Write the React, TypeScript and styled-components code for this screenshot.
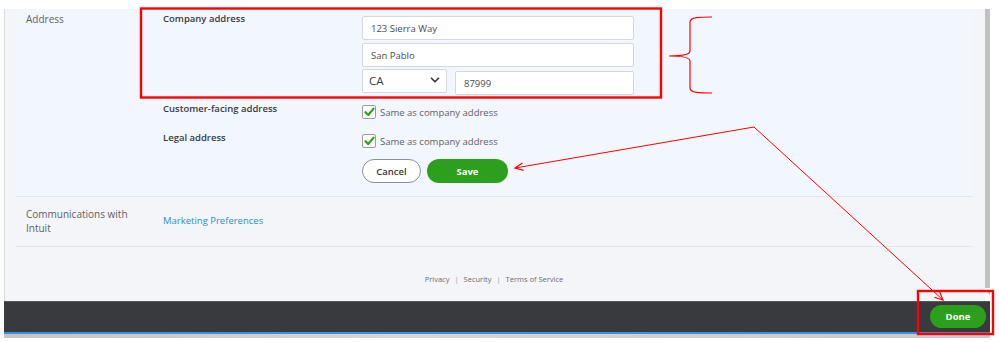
import styled, { createGlobalStyle } from "styled-components";
import { ChevronDown } from "lucide-react";

const GlobalStyle = createGlobalStyle`
  body {
    margin: 0;
    background: #ffffff;
    font-family: "Open Sans", "Liberation Sans", sans-serif;
  }
  * { box-sizing: border-box; }
`;

const App = () => {
  return (
    <Page>
      <GlobalStyle />
      <Window>
        <Main>
          <Content>
            <AddressSection>
              <SectionLabel>Address</SectionLabel>
              <SectionBody>
                <FieldRow>
                  <FieldLabel>Company address</FieldLabel>
                  <InputStack>
                    <TextInput defaultValue="123 Sierra Way" />
                    <TextInput defaultValue="San Pablo" />
                    <InputLine>
                      <Select>
                        <span>CA</span>
                        <ChevronDown size={14} strokeWidth={3} color="#393a3d" />
                      </Select>
                      <ZipInput defaultValue="87999" />
                    </InputLine>
                  </InputStack>
                </FieldRow>
                <FieldRow $top={7}>
                  <FieldLabel>Customer-facing address</FieldLabel>
                  <CheckLine>
                    <CheckBox>
                      <CheckMark />
                    </CheckBox>
                    <CheckText>Same as company address</CheckText>
                  </CheckLine>
                </FieldRow>
                <FieldRow $top={11}>
                  <FieldLabel>Legal address</FieldLabel>
                  <CheckLine>
                    <CheckBox>
                      <CheckMark />
                    </CheckBox>
                    <CheckText>Same as company address</CheckText>
                  </CheckLine>
                </FieldRow>
                <FieldRow $top={10}>
                  <span />
                  <ButtonGroup>
                    <CancelButton>Cancel</CancelButton>
                    <SaveButton>Save</SaveButton>
                  </ButtonGroup>
                </FieldRow>
              </SectionBody>
            </AddressSection>
            <CommsSection>
              <SectionLabel>
                Communications with
                <br />
                Intuit
              </SectionLabel>
              <SectionBody>
                <LinkText>Marketing Preferences</LinkText>
              </SectionBody>
            </CommsSection>
            <Footer>
              <FooterLink>Privacy</FooterLink>
              <Pipe>|</Pipe>
              <FooterLink>Security</FooterLink>
              <Pipe>|</Pipe>
              <FooterLink>Terms of Service</FooterLink>
            </Footer>
          </Content>
          <ScrollTrack>
            <Thumb />
            <ScrollArrow />
          </ScrollTrack>
        </Main>
        <DarkBar>
          <DoneButton>Done</DoneButton>
        </DarkBar>
        <BottomStrip />
      </Window>
      <Annotations />
    </Page>
  );
};

const CheckMark = () => (
  <svg width="11" height="10" viewBox="0 0 11 10">
    <path
      d="M1.5 5.2 L4.2 8 L9.6 1.6"
      fill="none"
      stroke="#2ca01c"
      strokeWidth="2.2"
      strokeLinecap="round"
      strokeLinejoin="round"
    />
  </svg>
);

const Annotations = () => (
  <Overlay width="999" height="342" viewBox="0 0 999 342">
    <g fill="none" stroke="#ff0000">
      <rect x="141" y="8.5" width="520" height="89" strokeWidth="2.4" />
      <path
        d="M712 17 C700 17 690 17 690 22 L690 51 C690 55 680 56 669 56 C680 56 690 57 690 61 L690 88 C690 93 700 93 712 93"
        strokeWidth="1.2"
      />
      <polyline points="515,168 754,127 943,300" strokeWidth="1" />
      <polyline points="522.4,162.9 515,168 523.7,170.4" strokeWidth="1.2" />
      <polyline points="939.6,291.7 943,300 934.4,297.3" strokeWidth="1.2" />
      <rect x="918" y="291" width="75" height="43" strokeWidth="2.4" />
    </g>
  </Overlay>
);

const Page = styled.div`
  width: 999px;
  height: 342px;
  position: relative;
  overflow: hidden;
  padding-top: 9px;
  background: #ffffff;
`;

const Overlay = styled.svg`
  position: absolute;
  left: 0;
  top: 0;
  pointer-events: none;
`;

const Window = styled.div`
  margin-left: 4px;
  width: 986px;
  display: flex;
  flex-direction: column;
`;

const Main = styled.div`
  display: flex;
  height: 292px;
`;

const Content = styled.div`
  flex: 1;
  display: flex;
  flex-direction: column;
  background: #f4f5f8;
  border-left: 1px solid #d9dbdf;
  padding: 0 12px 0 10px;
`;

const ScrollTrack = styled.div`
  width: 5px;
  display: flex;
  flex-direction: column;
  background: #ffffff;
`;

const Thumb = styled.div`
  flex: 1;
  background: #c1c1c1;
`;

const ScrollArrow = styled.div`
  height: 13px;
  position: relative;
  &::after {
    content: "";
    position: absolute;
    right: 0;
    top: 4px;
    border-left: 3px solid transparent;
    border-top: 3px solid #b5b5b5;
  }
`;

const Section = styled.div`
  display: grid;
  grid-template-columns: 148px 1fr;
  border-bottom: 1px solid #e3e8ef;
`;

const AddressSection = styled(Section)`
  height: 188px;
  background: #f2f7fd;
  padding-top: 3px;
`;

const CommsSection = styled(Section)`
  height: 50px;
  padding-top: 10px;
`;

const SectionLabel = styled.div`
  padding-left: 11px;
  font-size: 10px;
  line-height: 14px;
  color: #5f6065;
`;

const SectionBody = styled.div`
  display: flex;
  flex-direction: column;
`;

const FieldRow = styled.div<{ $top?: number }>`
  display: grid;
  grid-template-columns: 199px 1fr;
  margin-top: ${(p) => p.$top ?? 0}px;
`;

const FieldLabel = styled.div`
  font-size: 9.5px;
  line-height: 14px;
  font-weight: 600;
  color: #393a3d;
`;

const InputStack = styled.div`
  display: flex;
  flex-direction: column;
  gap: 3px;
  width: 272px;
  margin-top: 4px;
`;

const InputLine = styled.div`
  display: flex;
  align-items: flex-start;
  gap: 8px;
  margin-top: -1px;
`;

const TextInput = styled.input`
  width: 100%;
  height: 24px;
  margin: 0;
  padding: 0 8px;
  border: 1px solid #d4d7dc;
  border-radius: 2px;
  background: #ffffff;
  font-family: inherit;
  font-size: 9.5px;
  color: #4a4b4f;
  outline: none;
`;

const ZipInput = styled(TextInput)`
  flex: 1;
  width: auto;
  min-width: 0;
  margin-top: 2px;
`;

const Select = styled.div`
  width: 85px;
  height: 24px;
  display: flex;
  align-items: center;
  justify-content: space-between;
  padding: 0 4px 2px 6px;
  border: 1px solid #d4d7dc;
  border-radius: 2px;
  background: #ffffff;
  font-size: 11.5px;
  color: #393a3d;
`;

const CheckLine = styled.div`
  display: flex;
  align-items: center;
  gap: 4px;
  padding-top: 2px;
`;

const CheckBox = styled.div`
  width: 14px;
  height: 14px;
  display: flex;
  align-items: center;
  justify-content: center;
  border: 1px solid #9a9ca1;
  border-radius: 2px;
  background: #ffffff;
`;

const CheckText = styled.span`
  font-size: 9.5px;
  line-height: 14px;
  padding-top: 2px;
  color: #5f6065;
`;

const ButtonGroup = styled.div`
  display: flex;
  gap: 6px;
`;

const PillButton = styled.button`
  height: 24px;
  border-radius: 12px;
  font-family: inherit;
  font-size: 9.5px;
  font-weight: 600;
  cursor: pointer;
`;

const CancelButton = styled(PillButton)`
  width: 59px;
  background: #ffffff;
  border: 1px solid #8d9096;
  color: #393a3d;
`;

const SaveButton = styled(PillButton)`
  width: 81px;
  background: #2ca01c;
  border: none;
  color: #ffffff;
  font-weight: 700;
`;

const LinkText = styled.span`
  padding-top: 7px;
  font-size: 9.5px;
  line-height: 14px;
  color: #2d8fd0;
`;

const Footer = styled.div`
  flex: 1;
  display: flex;
  justify-content: center;
  align-items: flex-start;
  gap: 5px;
  padding-top: 26px;
  font-size: 7.5px;
  line-height: 12px;
  color: #6b6c72;
`;

const FooterLink = styled.span``;

const Pipe = styled.span`
  color: #9a9ca1;
`;

const DarkBar = styled.div`
  height: 31px;
  display: flex;
  align-items: center;
  justify-content: flex-end;
  padding: 0 4px 1px 0;
  background: #393a3d;
  border-top: 1px solid #55575b;
`;

const DoneButton = styled.button`
  width: 56px;
  height: 23px;
  border: none;
  border-radius: 12px;
  background: #2ca01c;
  color: #ffffff;
  font-family: inherit;
  font-size: 9.5px;
  font-weight: 700;
`;

const BottomStrip = styled.div`
  height: 6px;
  border-top: 2px solid #3b8fe0;
  background: linear-gradient(90deg, #c4c4c4, #d6d6d6 40%, #c8c8c8);
`;

export default App;
